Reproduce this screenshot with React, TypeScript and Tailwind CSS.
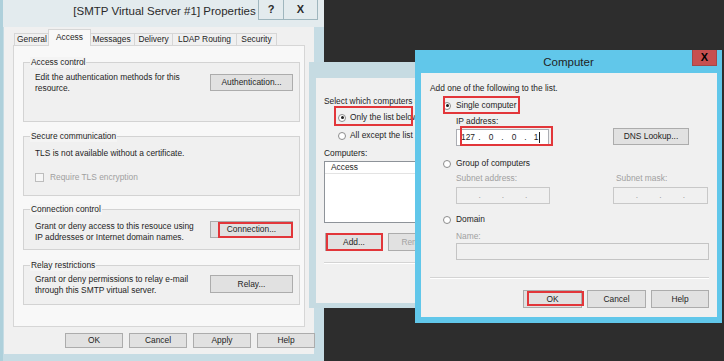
import { Fragment, type ReactNode } from 'react'

const Btn = ({
  label,
  className = '',
  disabled = false,
}: {
  label: string
  className?: string
  disabled?: boolean
}) => (
  <div
    className={`flex shrink-0 items-center justify-center border border-[#acacac] bg-[#e1e1e1] leading-[11px] whitespace-nowrap ${
      disabled ? 'text-[#a3a3a3]' : 'text-[#1e1e1e]'
    } ${className}`}
  >
    {label}
  </div>
)

const Radio = ({ on = false, label, gap = 'mr-[5px]' }: { on?: boolean; label: string; gap?: string }) => (
  <div className="flex h-[11px] items-center whitespace-nowrap">
    <span
      className={`${gap} flex h-[8px] w-[8px] shrink-0 items-center justify-center rounded-full border border-[#8c8c8c] bg-white`}
    >
      {on ? <span className="h-[3px] w-[3px] rounded-full bg-[#1e1e1e]" /> : null}
    </span>
    <span className="leading-[11px]">{label}</span>
  </div>
)

const GroupBox = ({ title, className, children }: { title: string; className: string; children: ReactNode }) => (
  <div className={`relative w-[277px] shrink-0 border border-[#d3d3d3] bg-[#f0f0f0] pl-[11px] pr-[6px] ${className}`}>
    <span className="absolute -top-[6px] left-[6px] bg-[#f4f4f4] px-[1px] leading-[11px] whitespace-nowrap">
      {title}
    </span>
    {children}
  </div>
)

const RedBox = ({ className }: { className: string }) => (
  <div className={`pointer-events-none absolute border-2 border-[#e2363a] ${className}`} />
)

const IpBox = ({
  values,
  disabled = false,
  cursor = false,
  className = '',
}: {
  values: string[]
  disabled?: boolean
  cursor?: boolean
  className?: string
}) => (
  <div
    className={`flex h-[17px] shrink-0 items-center border px-[1px] leading-[11px] ${
      disabled
        ? 'border-[#c8c8c8] bg-[#f0f0f0] text-[#a0a0a0]'
        : 'border-[#abadb3] bg-white text-[#1e1e1e]'
    } ${className}`}
  >
    {values.map((v, i) => (
      <Fragment key={i}>
        {i > 0 ? <span className="w-[3px] text-center">.</span> : null}
        <span className="flex flex-1 items-center justify-center">
          {v}
          {cursor && i === values.length - 1 ? <span className="ml-[1px] h-[11px] w-px bg-[#1e1e1e]" /> : null}
        </span>
      </Fragment>
    ))}
  </div>
)

const tabs = [
  { name: 'General', w: 'w-[36px]' },
  { name: 'Access', w: 'w-[43px]', active: true },
  { name: 'Messages', w: 'w-[47px]' },
  { name: 'Delivery', w: 'w-[39px]' },
  { name: 'LDAP Routing', w: 'w-[65px]' },
  { name: 'Security', w: 'w-[41px]' },
]

const PropertiesWindow = () => (
  <div className="absolute left-0 top-0 flex h-[361px] w-[324px] flex-col border-l-[3px] border-[#aed0db] bg-[#c6dce4]">
    <div className="relative flex h-[27px] shrink-0 items-center justify-center bg-[#e3ebee] pb-[3px] pl-[2px] text-[11.5px] text-[#2a2a2a]">
      [SMTP Virtual Server #1] Properties
      <div className="absolute right-[6px] top-0 flex">
        <div className="flex h-[20px] w-[26px] items-center justify-center border border-t-0 border-[#9fb6be] text-[11px] font-bold">
          ?
        </div>
        <div className="-ml-px flex h-[20px] w-[35px] items-center justify-center border border-t-0 border-[#9fb6be] text-[11px] font-bold">
          X
        </div>
      </div>
    </div>

    <div className="ml-[1px] flex h-[327px] w-[310px] shrink-0 flex-col bg-[#f0f0f0]">
      <div className="ml-[10px] mt-[2px] flex h-[16px] items-end">
        {tabs.map((t, i) =>
          t.active ? (
            <div
              key={t.name}
              className={`relative z-10 -mx-[2px] -mb-px flex h-[17px] items-center justify-center border border-b-0 border-[#d6d6d6] bg-[#f8f8f8] pb-[2px] leading-[11px] ${t.w}`}
            >
              {t.name}
            </div>
          ) : (
            <div
              key={t.name}
              className={`flex h-[12px] items-center justify-center border border-b-0 border-[#d6d6d6] bg-[#f0f0f0] leading-[11px] whitespace-nowrap ${
                i > 0 ? '-ml-px' : ''
              } ${t.w}`}
            >
              {t.name}
            </div>
          ),
        )}
      </div>

      <div className="ml-[9px] flex h-[282px] w-[292px] shrink-0 flex-col border border-[#d6d6d6] bg-[#f8f8f8] pl-[9px] pt-[16px]">
        <GroupBox title="Access control" className="flex h-[60px] items-start">
          <div className="mt-[9px] leading-[11px]">
            Edit the authentication methods for this
            <br />
            resource.
          </div>
          <Btn label="Authentication..." className="ml-auto mt-[11px] h-[17px] w-[83px]" />
        </GroupBox>

        <GroupBox title="Secure communication" className="mt-[14px] h-[60px]">
          <div className="mt-[11px] leading-[11px]">TLS is not available without a certificate.</div>
          <div className="mt-[13px] flex h-[11px] items-center text-[#a0a0a0]">
            <span className="mr-[6px] h-[9px] w-[9px] border border-[#bdbdbd] bg-[#f6f6f6]" />
            Require TLS encryption
          </div>
        </GroupBox>

        <GroupBox title="Connection control" className="mt-[13px] flex h-[41px] items-start">
          <div className="mt-[11px] leading-[11px] whitespace-nowrap">
            Grant or deny access to this resouce using
            <br />
            IP addresses or Internet domain names.
          </div>
          <Btn label="Connection..." className="ml-auto mt-[11px] h-[17px] w-[83px]" />
        </GroupBox>

        <GroupBox title="Relay restrictions" className="mt-[15px] flex h-[40px] items-start">
          <div className="mt-[8px] leading-[11px] whitespace-nowrap">
            Grant or deny permissions to relay e-mail
            <br />
            through this SMTP virtual server.
          </div>
          <Btn label="Relay..." className="ml-auto mt-[9px] h-[18px] w-[83px]" />
        </GroupBox>
      </div>

      <div className="ml-[61px] mt-[6px] flex gap-[6px]">
        <Btn label="OK" className="h-[15px] w-[58px]" />
        <Btn label="Cancel" className="h-[15px] w-[58px]" />
        <Btn label="Apply" className="h-[15px] w-[58px]" />
        <Btn label="Help" className="h-[15px] w-[58px]" />
      </div>
    </div>

    <RedBox className="left-[47px] top-[29px] h-[17px] w-[39px]" />
    <RedBox className="left-[215px] top-[222px] h-[16px] w-[75px]" />
  </div>
)

// only the left strip of this dialog is visible, the Computer dialog covers the rest
const AccessListWindow = () => (
  <div className="absolute left-[309px] top-[62px] h-[246px] w-[110px] overflow-hidden bg-[#c6dbe2] pl-[7px] pt-[16px]">
    <div className="flex h-[225px] w-[197px] flex-col bg-[#f0f0f0] pl-[8px]">
      <div className="mt-[18px] leading-[11px] whitespace-nowrap">Select which computers may access</div>
      <div className="mt-[5px] pl-[14px]">
        <Radio on label="Only the list below" gap="mr-[4px]" />
      </div>
      <div className="mt-[7px] pl-[14px]">
        <Radio label="All except the list below" gap="mr-[4px]" />
      </div>
      <div className="mt-[7px] leading-[11px]">Computers:</div>
      <div className="mt-[2px] h-[62px] w-[185px] shrink-0 border border-[#8e9399] bg-white">
        <div className="flex h-[12px] items-center border-b border-[#e3e3e3] pl-[6px] leading-[11px]">Access</div>
      </div>
      <div className="ml-[1px] mt-[10px] flex gap-[5px]">
        <Btn label="Add..." className="h-[18px] w-[58px]" />
        <Btn label="Remove" disabled className="h-[18px] w-[58px]" />
      </div>
      <div className="mt-[11px] h-[2px] w-[185px] shrink-0 border-t border-b border-t-[#d4d4d4] border-b-white" />
    </div>

    <RedBox className="left-[25px] top-[44px] h-[20px] w-[79px]" />
    <RedBox className="left-[17px] top-[171px] h-[18px] w-[57px]" />
  </div>
)

const ComputerWindow = () => (
  <div className="absolute left-[415px] top-[50px] flex h-[273px] w-[307px] flex-col bg-[#61c7ea]">
    <div className="relative flex h-[23px] shrink-0 items-center justify-center pt-[3px] text-[11.5px] text-[#1f1f1f]">
      Computer
      <div className="absolute right-[5px] top-0 flex h-[16px] w-[25px] items-center justify-center border border-t-0 border-[#a34848] bg-[#c75050] text-[11px] font-bold text-black">
        X
      </div>
    </div>

    <div className="ml-[6px] flex h-[244px] w-[296px] shrink-0 flex-col bg-[#f0f0f0] pl-[9px]">
      <div className="mt-[10px] leading-[11px]">Add one of the following to the list.</div>
      <div className="mt-[6px] pl-[13px]">
        <Radio on label="Single computer" />
      </div>
      <div className="mt-[5px] pl-[26px] leading-[11px]">IP address:</div>
      <div className="mt-[2px] flex items-start pl-[26px]">
        <IpBox values={['127', '0', '0', '1']} cursor className="w-[93px]" />
        <Btn label="DNS Lookup..." className="-mt-px ml-[64px] h-[17px] w-[76px]" />
      </div>

      <div className="mt-[12px] pl-[13px]">
        <Radio label="Group of computers" />
      </div>
      <div className="mt-[4px] flex pl-[26px] text-[#a0a0a0]">
        <div className="flex w-[94px] flex-col">
          <div className="leading-[11px]">Subnet address:</div>
          <IpBox values={['', '', '', '']} disabled className="mt-[3px] w-[94px]" />
        </div>
        <div className="ml-[63px] flex w-[95px] flex-col">
          <div className="pl-[3px] leading-[11px]">Subnet mask:</div>
          <IpBox values={['', '', '', '']} disabled className="mt-[3px] w-[95px]" />
        </div>
      </div>

      <div className="mt-[10px] pl-[13px]">
        <Radio label="Domain" />
      </div>
      <div className="mt-[6px] pl-[26px] leading-[11px] text-[#a0a0a0]">Name:</div>
      <div className="ml-[26px] mt-[1px] h-[17px] w-[253px] shrink-0 border border-[#c4c4c4] bg-[#f0f0f0]" />

      <div className="mt-[17px] h-[2px] w-[279px] shrink-0 border-t border-b border-t-[#d4d4d4] border-b-white" />
      <div className="mt-[11px] flex justify-end gap-[5px] pr-[8px]">
        <Btn label="OK" className="h-[18px] w-[59px]" />
        <Btn label="Cancel" className="h-[18px] w-[59px]" />
        <Btn label="Help" className="h-[18px] w-[58px]" />
      </div>
    </div>

    <RedBox className="left-[28px] top-[46px] h-[18px] w-[77px]" />
    <RedBox className="left-[45px] top-[76px] h-[20px] w-[93px]" />
    <RedBox className="left-[112px] top-[241px] h-[15px] w-[57px]" />
  </div>
)

export default function App() {
  return (
    <div className="relative h-[361px] w-[724px] overflow-hidden bg-[#2d2d2d] font-['Liberation_Sans',Arial,sans-serif] text-[8.4px] text-[#1e1e1e]">
      <PropertiesWindow />
      <AccessListWindow />
      <ComputerWindow />
    </div>
  )
}
